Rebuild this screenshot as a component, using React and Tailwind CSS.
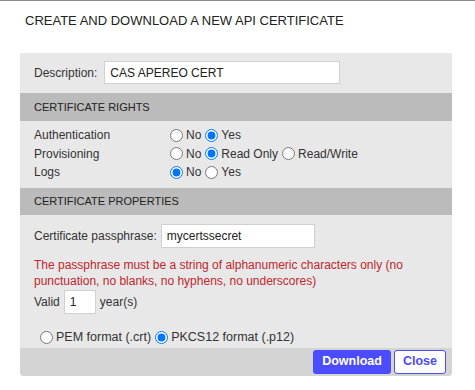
import React from 'react';

function Radio({ name, checked, label }) {
    return (
        <label className="inline-flex items-center mr-[4px]">
            <input
                type="radio"
                name={name}
                defaultChecked={checked}
                className="w-[13px] h-[13px] m-0 mr-[3px] accent-[#0075ff]"
            />
            <span>{label}</span>
        </label>
    );
}

export default function App() {
    const rights = [
        { id: 'auth', label: 'Authentication', options: [['No', false], ['Yes', true]] },
        { id: 'prov', label: 'Provisioning', options: [['No', false], ['Read Only', true], ['Read/Write', false]] },
        { id: 'logs', label: 'Logs', options: [['No', true], ['Yes', false]] },
    ];

    return (
        <div
            className="w-[475px] h-[390px] bg-white border-t border-[#8a8a8a] text-[12px] text-[#333]"
            style={{ fontFamily: '"Liberation Sans", Arial, sans-serif' }}
        >
            {/* Title */}
            <div className="pl-[25px] pt-[12px] h-[52px] text-[13px] text-[#222] leading-[16px]">
                CREATE AND DOWNLOAD A NEW API CERTIFICATE
            </div>

            <div className="ml-[20px] w-[432px] bg-[#e8e8e8] rounded-b-[4px] overflow-hidden">
                {/* Description */}
                <div className="flex items-center pl-[14px] pt-[8px] pb-[9px]">
                    <span className="mr-[7px]">Description:</span>
                    <input
                        defaultValue="CAS APEREO CERT"
                        className="w-[236px] h-[23px] bg-white border border-[#d0d0d0] px-[5px] text-[12px] text-[#222] outline-none"
                    />
                </div>

                {/* Rights */}
                <div className="h-[28px] bg-[#bbbbbb] flex items-center pl-[14px] text-[11px] text-[#222]">
                    CERTIFICATE RIGHTS
                </div>
                <div className="pl-[14px] pt-[5px] pb-[6px]">
                    {rights.map((row) => (
                        <div key={row.id} className="flex items-center h-[18.5px]">
                            <span className="w-[136px]">{row.label}</span>
                            {row.options.map(([opt, on]) => (
                                <Radio key={opt} name={row.id} checked={on} label={opt} />
                            ))}
                        </div>
                    ))}
                </div>

                {/* Properties */}
                <div className="h-[27px] bg-[#bbbbbb] flex items-center pl-[14px] text-[11px] text-[#222]">
                    CERTIFICATE PROPERTIES
                </div>
                <div className="pl-[14px] pt-[9px]">
                    <div className="flex items-center">
                        <span className="mr-[4px]">Certificate passphrase:</span>
                        <input
                            defaultValue="mycertssecret"
                            className="w-[154px] h-[24px] bg-white border border-[#d0d0d0] px-[5px] text-[12px] text-[#222] outline-none"
                        />
                    </div>
                    <p className="mt-[9px] text-[#c0262d] leading-[16px] pr-[10px]">
                        The passphrase must be a string of alphanumeric characters only (no punctuation, no blanks, no hyphens, no underscores)
                    </p>
                    <div className="flex items-center mt-[1px]">
                        <span className="mr-[4px]">Valid</span>
                        <input
                            defaultValue="1"
                            className="w-[32px] h-[24px] bg-white border border-[#d0d0d0] px-[5px] text-[12px] text-[#222] outline-none"
                        />
                        <span className="ml-[4px]">year(s)</span>
                    </div>
                    <div className="flex items-center pl-[6px] mt-[17px] h-[14px] mb-[3px] text-[12.5px]">
                        <Radio name="fmt" checked={false} label="PEM format (.crt)" />
                        <Radio name="fmt" checked={true} label="PKCS12 format (.p12)" />
                    </div>
                </div>

                {/* Footer */}
                <div className="bg-[#d4d4d4] h-[28px] flex items-center justify-end gap-[3px] pr-[6px]">
                    <button className="w-[78px] h-[24px] bg-[#4b4bff] text-white font-bold text-[12.5px] rounded-[3px]">
                        Download
                    </button>
                    <button className="w-[52px] h-[24px] bg-white border border-[#4b4bff] text-[#4b4bff] font-bold text-[12.5px] rounded-[3px]">
                        Close
                    </button>
                </div>
            </div>
        </div>
    );
}
